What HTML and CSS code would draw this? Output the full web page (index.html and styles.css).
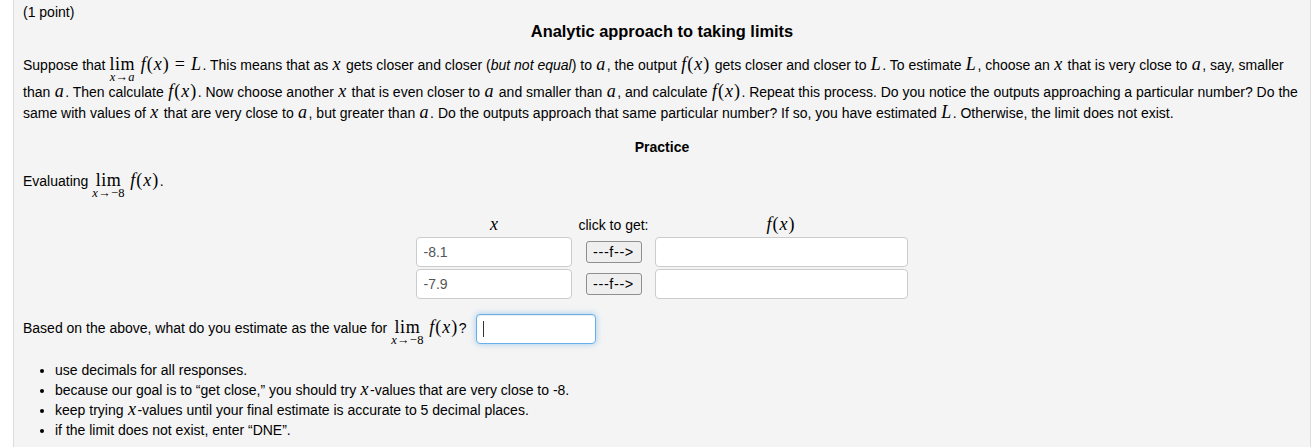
FILE: index.html
```html
<!DOCTYPE html>
<html>
<head>
<meta charset="utf-8">
<link rel="stylesheet" href="styles.css">
</head>
<body>
<div class="problem">
  <p class="points">(1 point)</p>
  <h3 class="title">Analytic approach to taking limits</h3>
  <p class="intro">Suppose that <span class="lim"><span class="lim-op">lim</span><span class="lim-sub"><i>x</i>→<i>a</i></span></span><span class="m"><i>f</i>(<i>x</i>)<span class="eq">=</span><i>L</i></span>. This means that as <span class="m"><i>x</i></span> gets closer and closer (<em>but not equal</em>) to <span class="m"><i>a</i></span>, the output <span class="m"><i>f</i>(<i>x</i>)</span> gets closer and closer to <span class="m"><i>L</i></span>. To estimate <span class="m"><i>L</i></span>, choose an <span class="m"><i>x</i></span> that is very close to <span class="m"><i>a</i></span>, say, smaller than <span class="m"><i>a</i></span>. Then calculate <span class="m"><i>f</i>(<i>x</i>)</span>. Now choose another <span class="m"><i>x</i></span> that is even closer to <span class="m"><i>a</i></span> and smaller than <span class="m"><i>a</i></span>, and calculate <span class="m"><i>f</i>(<i>x</i>)</span>. Repeat this process. Do you notice the outputs approaching a particular number? Do the same with values of <span class="m"><i>x</i></span> that are very close to <span class="m"><i>a</i></span>, but greater than <span class="m"><i>a</i></span>. Do the outputs approach that same particular number? If so, you have estimated <span class="m"><i>L</i></span>. Otherwise, the limit does not exist.</p>
  <p class="practice">Practice</p>
  <p class="evaluating">Evaluating <span class="lim"><span class="lim-op">lim</span><span class="lim-sub"><i>x</i>→−8</span></span><span class="m"><i>f</i>(<i>x</i>)</span>.</p>
  <table class="calc">
    <tr class="head">
      <td><span class="m"><i>x</i></span></td>
      <td>click to get:</td>
      <td><span class="m"><i>f</i>(<i>x</i>)</span></td>
    </tr>
    <tr>
      <td><input class="box box-x" type="text" value="-8.1"></td>
      <td><button class="fbtn" type="button">---f--&gt;</button></td>
      <td><input class="box box-f" type="text" value=""></td>
    </tr>
    <tr>
      <td><input class="box box-x" type="text" value="-7.9"></td>
      <td><button class="fbtn" type="button">---f--&gt;</button></td>
      <td><input class="box box-f" type="text" value=""></td>
    </tr>
  </table>
  <p class="estimate">Based on the above, what do you estimate as the value for <span class="lim"><span class="lim-op">lim</span><span class="lim-sub"><i>x</i>→−8</span></span><span class="m"><i>f</i>(<i>x</i>)</span>? <span class="answer-wrap"><input class="box answer" type="text" value=""></span></p>
  <ul class="notes">
    <li>use decimals for all responses.</li>
    <li>because our goal is to “get close,” you should try <span class="m"><i>x</i></span>-values that are very close to -8.</li>
    <li>keep trying <span class="m"><i>x</i></span>-values until your final estimate is accurate to 5 decimal places.</li>
    <li>if the limit does not exist, enter “DNE”.</li>
  </ul>
</div>
</body>
</html>
```

FILE: styles.css
```css
html, body {
  margin: 0;
  padding: 0;
  background: #ffffff;
}

body {
  font-family: "Liberation Sans", Arial, sans-serif;
  font-size: 14px;
  line-height: 20px;
  color: #000;
}

.problem {
  margin: 0 2px 0 13px;
  height: 447px;
  box-sizing: border-box;
  background: #f4f4f4;
  border-left: 1px solid #dcdcdc;
  border-right: 1px solid #dcdcdc;
  padding: 4px 9px 0 9px;
  overflow: hidden;
}

p {
  margin: 0;
}

.points {
  line-height: 17px;
}

.title {
  margin: 0;
  font-size: 16.4px;
  font-weight: bold;
  line-height: 20px;
  text-align: center;
}

.intro {
  margin-top: 14px;
  line-height: 21px;
}

.practice {
  margin-top: 13px;
  font-weight: bold;
  text-align: center;
}

.evaluating {
  margin-top: 14px;
}

/* math */
.m {
  font-family: "Liberation Serif", "Times New Roman", serif;
  font-size: 18px;
  letter-spacing: 1px;
  line-height: 1;
  padding: 0 0.5px;
}

.m i,
.lim-sub i {
  font-style: italic;
}

.eq {
  margin: 0 5px;
}

.lim {
  display: inline-flex;
  flex-direction: column;
  align-items: center;
  font-family: "Liberation Serif", "Times New Roman", serif;
  line-height: 1;
  margin-right: 5px;
}

.lim-op {
  font-size: 18px;
  letter-spacing: 0.6px;
  line-height: 16px;
}

.lim-sub {
  font-size: 12.5px;
  line-height: 10px;
  margin-top: 0;
  white-space: nowrap;
  letter-spacing: 0.3px;
}

/* table */
.calc {
  margin: 16px auto 0 auto;
  border-collapse: collapse;
}

.calc td {
  padding: 1px 3px;
  text-align: center;
  vertical-align: middle;
}

.calc .head td {
  line-height: 20px;
}

.box {
  box-sizing: border-box;
  height: 30px;
  border: 1px solid #cccccc;
  border-radius: 4px;
  background: #ffffff;
  font-family: "Liberation Sans", Arial, sans-serif;
  font-size: 14px;
  color: #555;
  padding: 4px 6px;
  margin: 0;
  display: block;
}

.box-x {
  width: 156px;
}

.box-f {
  width: 253px;
}

.fbtn {
  box-sizing: border-box;
  width: 56px;
  height: 22px;
  border: 1px solid #8f8f8f;
  border-radius: 3px;
  background: #efefef;
  font-family: "Liberation Sans", Arial, sans-serif;
  font-size: 14.5px;
  letter-spacing: 0.6px;
  color: #000;
  padding: 0;
  margin: 0 auto;
  display: block;
}

/* estimate */
.estimate {
  margin-top: 14px;
}

.answer-wrap {
  display: inline-block;
  position: relative;
  vertical-align: middle;
  margin-left: 6px;
}

.answer {
  width: 120px;
  border-color: #66afe9;
  box-shadow: inset 0 1px 1px rgba(0,0,0,.075), 0 0 6px rgba(102,175,233,.6);
  outline: none;
}

.answer-wrap::after {
  content: "";
  position: absolute;
  left: 7px;
  top: 7px;
  width: 1px;
  height: 16px;
  background: #333;
}

.notes {
  margin: 15px 0 0 0;
  padding-left: 32px;
}

.notes li {
  line-height: 20px;
}
```
